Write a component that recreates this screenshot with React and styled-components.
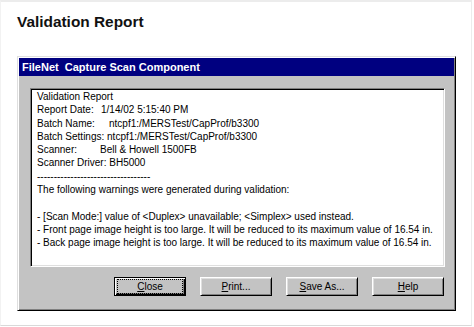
import React from 'react';
import styled, { createGlobalStyle } from 'styled-components';

const GlobalStyle = createGlobalStyle`
  html, body {
    margin: 0;
    padding: 0;
    background: #fff;
  }
  body {
    font-family: "Liberation Sans", Arial, sans-serif;
  }
`;

const Page = styled.div`
  box-sizing: border-box;
  width: 472px;
  height: 326px;
  padding: 11px 0 0 16px;
  background: #fff;
  border-top: 2px solid #ececec;
  border-left: 1px solid #f2f2f2;
  border-right: 1px solid #ececec;
  border-bottom: 1px solid #d9d9d9;
`;

const Heading = styled.h1`
  margin: 0;
  font-size: 15.4px;
  line-height: 18px;
  font-weight: bold;
  color: #111;
`;

const Dialog = styled.div`
  box-sizing: border-box;
  width: 439px;
  height: 255px;
  margin-top: 25px;
  padding: 1px;
  display: flex;
  flex-direction: column;
  background: #c3c3c3;
  border: 1px solid;
  border-color: #dfdfdf #000 #000 #dfdfdf;
  box-shadow: inset 1px 1px #fff, inset -1px -1px #808080;
`;

const TitleBar = styled.div`
  height: 18px;
  display: flex;
  align-items: center;
  padding-left: 3px;
  background: #000080;
  color: #fff;
  font-size: 11px;
  font-weight: bold;
  white-space: pre;
`;

const Report = styled.div`
  box-sizing: border-box;
  height: 179px;
  margin: 12px 9px 0 11px;
  padding: 1px 1px 1px 6px;
  background: #fff;
  border: 1px solid;
  border-color: #808080 #fff #fff #808080;
  box-shadow: inset 1px 1px #000, inset -1px -1px #dfdfdf;
  color: #000;
  font-size: 10px;
  line-height: 13.3px;
  white-space: pre;
`;

const Line = styled.div`
  height: 13.3px;
`;

const Label = styled.span`
  display: inline-block;
  min-width: ${p => p.$w || 0}px;
`;

const Buttons = styled.div`
  display: flex;
  justify-content: flex-end;
  gap: 14px;
  margin: 10px 10px 0 0;
`;

const Button = styled.button`
  box-sizing: border-box;
  width: 72px;
  height: 19px;
  padding: 0;
  display: flex;
  align-items: stretch;
  background: #c3c3c3;
  color: #000;
  font-family: "Liberation Sans", Arial, sans-serif;
  font-size: 10px;
  border: 1px solid;
  border-color: ${p => (p.$default ? '#000' : '#fff #000 #000 #fff')};
  box-shadow: ${p =>
    p.$default
      ? 'inset 1px 1px #fff, inset -1px -1px #000, inset -2px -2px #808080'
      : 'inset 1px 1px #dfdfdf, inset -1px -1px #808080'};
`;

const ButtonLabel = styled.span`
  flex: 1;
  display: flex;
  align-items: center;
  justify-content: center;
  margin: ${p => (p.$focus ? '1px 2px 1px 2px' : '0')};
  border: ${p => (p.$focus ? '1px dotted #000' : 'none')};
`;

const fields = [
  { label: 'Report Date:', w: 64, value: '1/14/02 5:15:40 PM' },
  { label: 'Batch Name:', w: 72, value: 'ntcpf1:/MERSTest/CapProf/b3300' },
  { label: 'Batch Settings: ', w: 0, value: 'ntcpf1:/MERSTest/CapProf/b3300' },
  { label: 'Scanner:', w: 63, value: 'Bell & Howell 1500FB' },
  { label: 'Scanner Driver: ', w: 0, value: 'BH5000' },
];

const warnings = [
  '- [Scan Mode:] value of <Duplex> unavailable; <Simplex> used instead.',
  '- Front page image height is too large. It will be reduced to its maximum value of 16.54 in.',
  '- Back page image height is too large. It will be reduced to its maximum value of 16.54 in.',
];

const App = () => (
  <Page>
    <GlobalStyle />
    <Heading>Validation Report</Heading>

    <Dialog>
      <TitleBar>FileNet  Capture Scan Component</TitleBar>

      <Report>
        <Line>Validation Report</Line>
        {fields.map(f => (
          <Line key={f.label}>
            <Label $w={f.w}>{f.label}</Label>
            {f.value}
          </Line>
        ))}
        <Line>{'-'.repeat(34)}</Line>
        <Line>The following warnings were generated during validation:</Line>
        <Line />
        {warnings.map(w => (
          <Line key={w}>{w}</Line>
        ))}
      </Report>

      <Buttons>
        <Button $default>
          <ButtonLabel $focus><u>C</u>lose</ButtonLabel>
        </Button>
        <Button>
          <ButtonLabel><u>P</u>rint...</ButtonLabel>
        </Button>
        <Button>
          <ButtonLabel><u>S</u>ave As...</ButtonLabel>
        </Button>
        <Button>
          <ButtonLabel><u>H</u>elp</ButtonLabel>
        </Button>
      </Buttons>
    </Dialog>
  </Page>
);

export default App;
